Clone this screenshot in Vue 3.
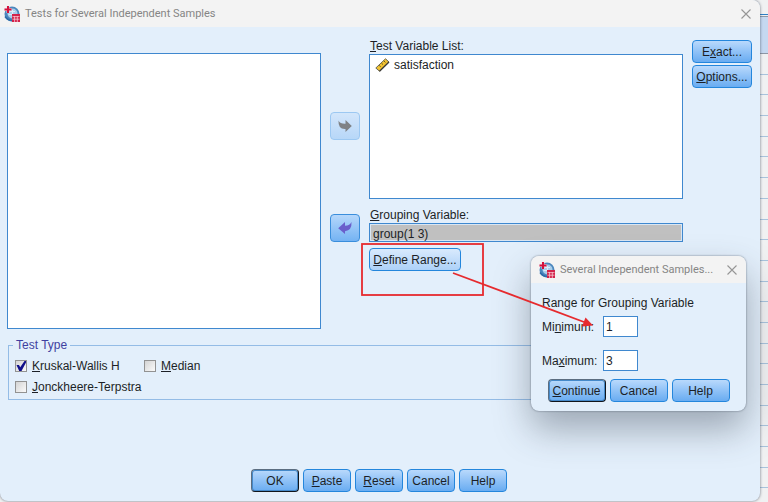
<script setup>
import { ref } from 'vue'

const variables = ref(['satisfaction'])
const grouping = ref('group(1 3)')
const minimum = ref('1')
const maximum = ref('3')

const testTypes = ref([
  { id: 'kruskal', key: 'K', rest: 'ruskal-Wallis H', checked: true },
  { id: 'median', key: 'M', rest: 'edian', checked: false },
  { id: 'jonckheere', key: 'J', rest: 'onckheere-Terpstra', checked: false }
])

const actions = [
  { key: '', rest: 'OK', primary: true },
  { key: 'P', rest: 'aste' },
  { key: 'R', rest: 'eset' },
  { key: '', rest: 'Cancel' },
  { key: '', rest: 'Help' }
]
</script>

<template>
  <div class="desktop">
    <!-- data sheet behind the dialogs -->
    <div class="sheet">
      <div class="sheet-top"></div>
      <div class="sheet-head"></div>
      <div v-for="n in 22" :key="n" class="sheet-row"></div>
    </div>

    <svg class="defs" width="0" height="0" aria-hidden="true">
      <symbol id="app-icon" viewBox="0 0 16 16">
        <circle cx="8" cy="8" r="7.5" fill="#4a86bd" />
        <circle cx="8.5" cy="7.5" r="5" fill="#a9cdea" />
        <path d="M6 5.5h5M4.5 8.5h7M8.5 4v8" stroke="#dcecf8" stroke-width="1.2" fill="none" />
        <path d="M1 10.5Q4 14.5 8 14.5" stroke="#2f6ca8" stroke-width="1.5" fill="none" />
        <path d="M4 0v7M0.5 3.5h7" stroke="#f3dfe6" stroke-width="2.8" />
        <path d="M4 0v7M0.5 3.5h7" stroke="#d3123c" stroke-width="2" />
        <rect x="8" y="8" width="8" height="8" fill="#d3224a" />
        <path d="M8.5 10.6h7M8.5 13.2h7M10.6 10v6M13.3 10v6" stroke="#f6c5d0" stroke-width="0.8" />
      </symbol>
      <symbol id="close-icon" viewBox="0 0 10 10">
        <path d="M0.5 0.5l9 9M9.5 0.5l-9 9" stroke="#969696" stroke-width="1.1" fill="none" />
      </symbol>
    </svg>

    <main class="dialog">
      <header class="titlebar">
        <svg class="app-icon"><use href="#app-icon" /></svg>
        <h1>Tests for Several Independent Samples</h1>
        <button class="close" type="button" aria-label="Close">
          <svg width="10" height="10"><use href="#close-icon" /></svg>
        </button>
      </header>

      <div class="columns">
        <div class="source list"></div>

        <div class="movers">
          <button class="mover disabled" type="button" aria-label="Move to test variables">
            <svg width="14" height="12" viewBox="0 0 14 12">
              <path d="M0.5 0.5Q2 4 7.5 3.8V0L13.8 6L7.5 12V9Q0 9.5 0.5 0.5Z" fill="#7f8286" />
            </svg>
          </button>
          <button class="mover" type="button" aria-label="Remove grouping variable">
            <svg width="14" height="12" viewBox="0 0 14 12">
              <path d="M13.5 0Q12 3.5 7 3.8V0L0.2 6.3L7 12V9.2Q14 8.5 13.5 0Z" fill="#6a5fcb" />
            </svg>
          </button>
        </div>

        <div class="targets">
          <span id="test-list" class="caption"><u>T</u>est Variable List:</span>
          <ul class="list variables" aria-labelledby="test-list">
            <li v-for="name in variables" :key="name">
              <svg width="15" height="14" viewBox="0 0 15 14">
                <path d="M0.8 10L10.5 0.8L14 4L4.5 13.2Z" fill="#f1c232" stroke="#6b6858" />
                <path d="M4 7.2l1.6 1.6M6.4 5l1.6 1.6M8.8 2.8l1.6 1.6" stroke="#6b5a20" />
                <path d="M4.5 13.2L14 4" stroke="#3b3b38" stroke-width="1.3" />
              </svg>
              {{ name }}
            </li>
          </ul>
          <label class="caption grouping-label" for="grouping"><u>G</u>rouping Variable:</label>
          <input id="grouping" v-model="grouping" class="grouping" type="text" readonly>
          <button class="btn define" type="button"><span><u>D</u>efine Range...</span></button>
        </div>

        <div class="side">
          <button class="btn" type="button"><span>E<u>x</u>act...</span></button>
          <button class="btn" type="button"><span><u>O</u>ptions...</span></button>
        </div>
      </div>

      <fieldset class="types">
        <legend>Test Type</legend>
        <label v-for="type in testTypes" :key="type.id" class="check">
          <input v-model="type.checked" type="checkbox">
          <span><u>{{ type.key }}</u>{{ type.rest }}</span>
        </label>
      </fieldset>

      <footer class="actions">
        <button v-for="action in actions" :key="action.rest" class="btn" :class="{ primary: action.primary }" type="button">
          <span><u>{{ action.key }}</u>{{ action.rest }}</span>
        </button>
      </footer>
    </main>

    <section class="popup">
      <header class="titlebar">
        <svg class="app-icon"><use href="#app-icon" /></svg>
        <h2>Several Independent Samples...</h2>
        <button class="close" type="button" aria-label="Close">
          <svg width="10" height="10"><use href="#close-icon" /></svg>
        </button>
      </header>
      <div class="range">
        <p>Range for Grouping Variable</p>
        <div class="field">
          <label for="minimum">Mi<u>n</u>imum:</label>
          <input id="minimum" v-model="minimum" type="text">
        </div>
        <div class="field">
          <label for="maximum">Ma<u>x</u>imum:</label>
          <input id="maximum" v-model="maximum" type="text">
        </div>
      </div>
      <footer class="popup-actions">
        <button class="btn primary" type="button"><span><u>C</u>ontinue</span></button>
        <button class="btn" type="button"><span>Cancel</span></button>
        <button class="btn" type="button"><span>Help</span></button>
      </footer>
    </section>

    <!-- red frame and arrow from Define Range to the popup -->
    <svg class="marker" width="236" height="92" viewBox="0 0 236 92" fill="none">
      <rect x="2" y="2" width="121" height="51" stroke="#e62a2e" stroke-width="1.8" />
      <path d="M93 31L224 80" stroke="#e62a2e" stroke-width="1.8" />
      <path d="M233 83.5L222 84.5L225.5 75.5Z" fill="#e62a2e" />
    </svg>
  </div>
</template>

<style>
body {
  margin: 0;
  overflow: hidden;
}
</style>

<style scoped>
.desktop {
  position: relative;
  min-height: 100vh;
  background: #c9cdd3;
  font-family: "Liberation Sans", Arial, sans-serif;
  font-size: 12px;
  line-height: 14px;
  color: #1c1f26;
}

.desktop *,
.desktop *::before {
  box-sizing: border-box;
}

.desktop button,
.desktop input {
  font: inherit;
  color: inherit;
}

.defs {
  position: absolute;
}

.sheet {
  position: absolute;
  inset: 0 0 -7px 0;
  display: flex;
  flex-direction: column;
  background: #f0f1f2;
}

.sheet-top {
  height: 15px;
  border-bottom: 1px solid #2f7fc4;
}

.sheet-head {
  height: 38px;
  margin-top: 1px;
  background: #c5d8f0;
  border-top: 1px solid #8d97a5;
  border-bottom: 1px solid #8d97a5;
}

.sheet-row {
  flex: 1;
  border-bottom: 1px solid #a8c3dc;
}

.dialog {
  position: relative;
  display: flex;
  flex-direction: column;
  min-height: calc(100vh - 1px);
  margin-right: 8px;
  overflow: hidden;
  background: #e3effb;
  border-radius: 0 8px 8px 8px;
  box-shadow: 0 0 3px rgba(50, 60, 75, 0.7);
}

.titlebar {
  display: flex;
  align-items: center;
  height: 27px;
  padding: 0 9px 0 4px;
  background: #f3f3f3;
  color: #858585;
}

.titlebar h1,
.titlebar h2 {
  flex: 1;
  margin: 0 0 0 5px;
  font-family: Roboto, "Segoe UI", sans-serif;
  font-size: 11px;
  font-weight: 400;
  white-space: nowrap;
}

.app-icon {
  width: 16px;
  height: 16px;
}

.close {
  display: flex;
  padding: 0;
  background: none;
  border: 0;
}

.columns {
  display: grid;
  grid-template-columns: 1fr 30px 1fr 60px;
  column-gap: 9px;
  padding: 12px 8px 0 7px;
}

.list {
  margin: 0;
  background: #fff;
  border: 1px solid #3f88cf;
}

.source {
  height: 276px;
  margin-top: 14px;
}

.movers {
  display: flex;
  flex-direction: column;
  gap: 74px;
  padding-top: 73px;
}

.mover {
  display: flex;
  align-items: center;
  justify-content: center;
  height: 28px;
  padding: 0;
  background: linear-gradient(#b5d7fb, #74b3f3);
  border: 1px solid #3a8edc;
  border-radius: 4px;
}

.mover.disabled {
  background: linear-gradient(#d3e6fb, #b7d7f8);
  border-color: #9cc8f2;
}

.targets {
  display: flex;
  flex-direction: column;
  align-items: stretch;
}

.caption {
  height: 15px;
  padding-left: 1px;
}

.variables {
  height: 145px;
  padding: 3px 5px;
  list-style: none;
}

.variables li {
  display: flex;
  align-items: center;
  gap: 4px;
}

.grouping-label {
  margin-top: 9px;
}

.grouping {
  height: 19px;
  padding: 2px 3px 0;
  background: #c0c0c0;
  border: 1px solid #3f88cf;
  border-radius: 0;
  outline: 0;
  box-shadow: inset 0 0 0 1px #d9e6f3;
}

.btn {
  height: 23px;
  padding: 0;
  text-align: center;
  background: linear-gradient(#b9d9fc, #90c2f7 50%, #69acf1);
  border: 1px solid #2486dc;
  border-radius: 4px;
}

.desktop .primary {
  border-color: #5b6d80 #10151c #10151c #5b6d80;
  box-shadow: inset 0 0 0 1px #4589c9;
}

.define {
  align-self: flex-start;
  width: 92px;
  margin-top: 6px;
  background: linear-gradient(#d9eafd, #add1f8);
}

.side {
  display: flex;
  flex-direction: column;
  gap: 2px;
  padding-top: 1px;
}

.types {
  display: grid;
  grid-template-columns: 129px 1fr;
  row-gap: 7px;
  margin: 9px 20px 0 8px;
  padding: 7px 6px 5px;
  border: 1px solid #94bce6;
}

.types legend {
  padding: 0 3px;
  margin-left: -2px;
  color: #3f3fa0;
}

.check {
  display: flex;
  align-items: center;
  gap: 5px;
}

.check input {
  appearance: none;
  position: relative;
  width: 12px;
  height: 12px;
  margin: 0;
  background: linear-gradient(135deg, #d4d4d4, #fafafa);
  border: 1px solid #929292;
}

.check input:checked::before {
  content: "";
  position: absolute;
  inset: 0;
  background: #10108a;
  clip-path: polygon(5% 40%, 30% 40%, 42% 62%, 85% 0, 100% 0, 100% 15%, 55% 100%, 32% 100%);
}

.actions {
  display: grid;
  grid-template-columns: repeat(5, 48px);
  justify-content: center;
  gap: 4px;
  margin-top: auto;
  padding: 0 2px 9px 0;
}

.popup {
  position: absolute;
  top: 256px;
  right: 22px;
  width: 215px;
  overflow: hidden;
  padding-bottom: 9px;
  background: #e3effb;
  border-radius: 8px;
  box-shadow: 0 0 2px rgba(50, 60, 75, 0.7), 0 18px 36px rgba(50, 60, 75, 0.4);
}

.popup .titlebar {
  padding: 0 9px 0 8px;
}

.range {
  padding: 13px 11px 0;
}

.range p {
  margin: 0 0 6px;
}

.field {
  display: grid;
  grid-template-columns: 61px 35px;
  align-items: center;
  margin-bottom: 13px;
}

.field input {
  height: 21px;
  padding: 0 2px;
  background: #fff;
  border: 1px solid #3f88cf;
  border-radius: 0;
}

.popup-actions {
  display: grid;
  grid-template-columns: repeat(3, 58px);
  justify-content: center;
  gap: 4px;
  margin-top: -5px;
}

.marker {
  position: absolute;
  top: 242px;
  left: 360px;
  pointer-events: none;
}
</style>
